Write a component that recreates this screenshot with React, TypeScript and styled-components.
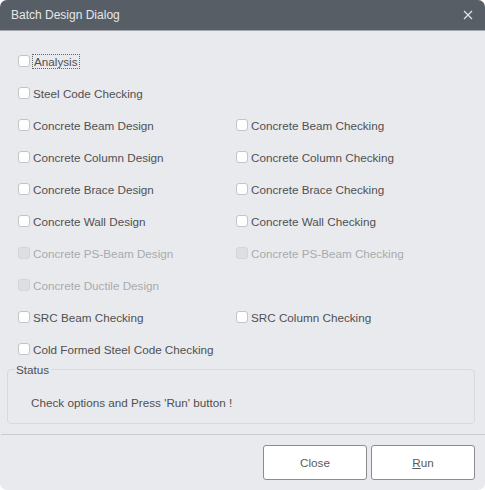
import React from "react";
import styled, { createGlobalStyle } from "styled-components";

const Global = createGlobalStyle`
  html, body { margin: 0; padding: 0; background: #ffffff; }
  * { box-sizing: border-box; }
  body { font-family: "Liberation Sans", Arial, sans-serif; }
`;

const Dialog = styled.div`
  width: 485px;
  height: 490px;
  background: #e9eaee;
  border-radius: 7px;
  overflow: hidden;
  display: flex;
  flex-direction: column;
  font-size: 11.7px;
  color: #505050;
`;

const TitleBar = styled.div`
  height: 31px;
  flex: none;
  background: #575e66;
  border-bottom: 1px solid #a3a7ad;
  display: flex;
  align-items: center;
  justify-content: space-between;
  padding: 0 12px 1px 11px;
  color: #e6e8ea;
  font-size: 12px;
`;

const CloseIcon = styled.svg`
  width: 10px;
  height: 10px;
  display: block;
`;

const Content = styled.div`
  flex: 1;
  display: flex;
  flex-direction: column;
  padding-top: 14px;
`;

const Grid = styled.div`
  display: grid;
  grid-template-columns: 218px 218px;
  grid-auto-rows: 32px;
  padding-left: 18px;
`;

const Item = styled.label<{ $disabled?: boolean; $full?: boolean }>`
  display: flex;
  align-items: center;
  gap: 3px;
  color: ${(p) => (p.$disabled ? "#a8aaad" : "#505050")};
  grid-column: ${(p) => (p.$full ? "1 / span 2" : "auto")};
  white-space: nowrap;
`;

const Box = styled.span<{ $disabled?: boolean }>`
  width: 12px;
  height: 12px;
  flex: none;
  border-radius: 3px;
  border: 1px solid ${(p) => (p.$disabled ? "#d4d5d8" : "#c2c4c8")};
  background: ${(p) => (p.$disabled ? "#dedfe2" : "#ffffff")};
`;

const Focused = styled.span`
  outline: 1px dotted #666;
  outline-offset: 0px;
  padding: 0 1px;
  line-height: 13px;
`;

const Group = styled.fieldset`
  margin: -2px 10px 0 7px;
  border: 1px solid #d7d9dd;
  border-radius: 4px;
  padding: 19px 10px 12px 23px;
`;

const Legend = styled.legend`
  padding: 0 2px 0 1px;
  margin-left: -16px;
  color: #505050;
  font-size: 11.7px;
`;

const StatusText = styled.div`
  line-height: 16px;
`;

const Separator = styled.div`
  height: 1px;
  background: #c9cbcf;
  margin: 10px 0 0 1px;
`;

const Footer = styled.div`
  display: flex;
  justify-content: flex-end;
  gap: 4px;
  padding: 10px 10px 0 0;
`;

const Button = styled.button`
  width: 104px;
  height: 35px;
  background: #ffffff;
  border: 1px solid #8c8c8c;
  border-radius: 3px;
  font-family: "Liberation Sans", Arial, sans-serif;
  font-size: 11.7px;
  color: #5a5a5a;
  padding: 0;
`;

const U = styled.span`
  text-decoration: underline;
`;

type Opt = { label: string; disabled?: boolean; full?: boolean; focus?: boolean };

const options: Opt[] = [
  { label: "Analysis", full: true, focus: true },
  { label: "Steel Code Checking", full: true },
  { label: "Concrete Beam Design" },
  { label: "Concrete Beam Checking" },
  { label: "Concrete Column Design" },
  { label: "Concrete Column Checking" },
  { label: "Concrete Brace Design" },
  { label: "Concrete Brace Checking" },
  { label: "Concrete Wall Design" },
  { label: "Concrete Wall Checking" },
  { label: "Concrete PS-Beam Design", disabled: true },
  { label: "Concrete PS-Beam Checking", disabled: true },
  { label: "Concrete Ductile Design", disabled: true, full: true },
  { label: "SRC Beam Checking" },
  { label: "SRC Column Checking" },
  { label: "Cold Formed Steel Code Checking", full: true },
];

export default function App() {
  return (
    <>
      <Global />
      <Dialog>
        <TitleBar>
          <span>Batch Design Dialog</span>
          <CloseIcon viewBox="0 0 10 10">
            <path d="M1 1 L9 9 M9 1 L1 9" stroke="#dfe1e4" strokeWidth="1.3" fill="none" />
          </CloseIcon>
        </TitleBar>
        <Content>
          <Grid>
            {options.map((o, i) => (
              <Item key={i} $disabled={o.disabled} $full={o.full}>
                <Box $disabled={o.disabled} />
                {o.focus ? <Focused>{o.label}</Focused> : <span>{o.label}</span>}
              </Item>
            ))}
          </Grid>
          <Group>
            <Legend>Status</Legend>
            <StatusText>Check options and Press 'Run' button !</StatusText>
          </Group>
          <Separator />
          <Footer>
            <Button>Close</Button>
            <Button>
              <U>R</U>un
            </Button>
          </Footer>
        </Content>
      </Dialog>
    </>
  );
}
